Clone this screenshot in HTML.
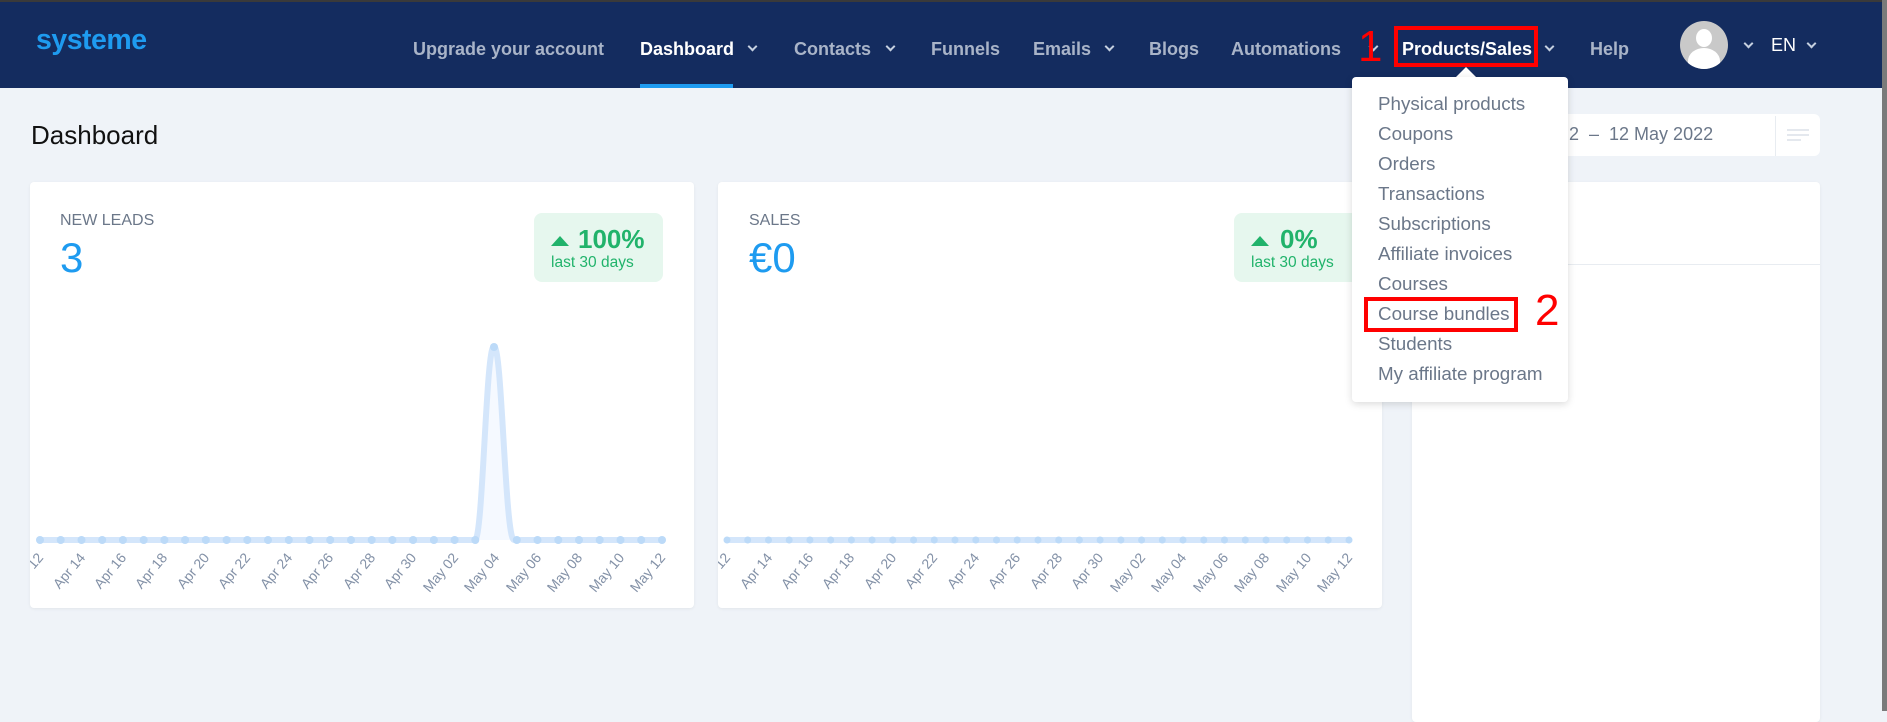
<!DOCTYPE html>
<html><head><meta charset="utf-8"><style>
*{margin:0;padding:0;box-sizing:border-box}
body{width:1887px;height:711px;overflow:hidden;background:#eff3f8;font-family:"Liberation Sans",sans-serif;position:relative}
.a{position:absolute;white-space:nowrap}
.nav{left:0;top:0;width:1887px;height:88px;background:#142c5f;border-top:2px solid #3a3a3a}
.ni{position:absolute;top:36px;font-size:18px;color:#a9b4c8;font-weight:bold;line-height:22px}
.chev{position:absolute;width:7px;height:7px;border-right:2px solid #c5d0e0;border-bottom:2px solid #c5d0e0;transform:rotate(45deg)}
.card{position:absolute;background:#fff;border-radius:4px;box-shadow:0 1px 3px rgba(0,0,0,.06);overflow:hidden}
.lbl{position:absolute;font-size:16px;color:#6b7789;top:212px}
.big{position:absolute;font-size:42px;color:#1e9bf0;top:234px;line-height:48px}
.badge{position:absolute;background:#e6f7ee;border-radius:8px;width:129px;height:69px;top:213px}
.badge .p{position:absolute;top:11px;font-size:26px;color:#21b36b;font-weight:bold}
.badge .tri{position:absolute;left:17px;top:23px;width:0;height:0;border-left:9px solid transparent;border-right:9px solid transparent;border-bottom:10px solid #21b36b}
.badge .s{position:absolute;left:17px;top:41px;font-size:15.5px;color:#21b36b}
.dd{left:1352px;top:77px;width:216px;height:325px;background:#fff;border-radius:4px;box-shadow:0 2px 8px rgba(0,0,0,.15)}
.di{position:absolute;left:26px;font-size:18.8px;color:#6b7789}
svg text{font-family:"Liberation Sans",sans-serif;font-size:14px;fill:#8391a7}
</style></head><body>
<div class="a nav">
<div class="a" style="left:36px;top:22px;font-size:28.5px;font-weight:bold;color:#1e9bf0;letter-spacing:-0.5px">systeme</div>
<div class="ni" style="left:413px">Upgrade your account</div>
<div class="ni" style="left:640px;color:#fff">Dashboard</div><div class="chev" style="left:749px;top:41px"></div>
<div class="a" style="left:640px;top:82px;width:93px;height:4px;background:#1e9bf0"></div>
<div class="ni" style="left:794px">Contacts</div><div class="chev" style="left:887px;top:41px"></div>
<div class="ni" style="left:931px">Funnels</div>
<div class="ni" style="left:1033px">Emails</div><div class="chev" style="left:1106px;top:41px"></div>
<div class="ni" style="left:1149px">Blogs</div>
<div class="ni" style="left:1231px">Automations</div><div class="chev" style="left:1370px;top:41px"></div>
<div class="a" style="left:1358px;top:20px;font-size:44px;color:#f00;line-height:50px">1</div>
<div class="a" style="left:1394px;top:24px;width:144px;height:41px;border:4px solid #f00"></div>
<div class="ni" style="left:1402px;color:#fff">Products/Sales</div><div class="chev" style="left:1546px;top:41px"></div>
<div class="ni" style="left:1590px">Help</div>
<div class="a" style="left:1680px;top:19px;width:48px;height:48px;border-radius:50%;background:#c9c9c9;overflow:hidden">
<div class="a" style="left:16px;top:8px;width:16px;height:18px;border-radius:50%;background:#fff"></div>
<div class="a" style="left:8px;top:27px;width:32px;height:26px;border-radius:50% 50% 0 0;background:#fff"></div></div>
<div class="chev" style="left:1745px;top:38px"></div>
<div class="a" style="left:1771px;top:33px;font-size:18px;color:#fff">EN</div>
<div class="chev" style="left:1808px;top:38px"></div>
</div>
<div class="a" style="left:1882px;top:0;width:5px;height:711px;background:#7a7a7a"></div>
<div class="a" style="left:31px;top:120px;font-size:26px;color:#111">Dashboard</div>
<div class="a" style="left:1500px;top:114px;width:320px;height:42px;background:#fff;border-radius:6px">
<div class="a" style="left:69px;top:10px;font-size:18px;color:#6b7789">2 &nbsp;–&nbsp; 12 May 2022</div>
<div class="a" style="left:275px;top:2px;width:1px;height:40px;background:#e8ecf1"></div>
<div class="a" style="left:287px;top:15px;width:22px;height:2px;background:#e4e8ee;box-shadow:0 5px 0 #e4e8ee"></div>
<div class="a" style="left:287px;top:25px;width:14px;height:2px;background:#e4e8ee"></div>
</div>
<div class="card" style="left:30px;top:182px;width:664px;height:426px">
<svg width="664" height="426" style="position:absolute;left:0;top:0">
<path d="M10 358 L445 358 C453 358 456 160 464 165 C472 160 475 358 484 358 L632 358" fill="#f5f9ff" stroke="#d4e6fb" stroke-width="6"/>
<g fill="#bcdaf8"><circle cx="10" cy="358" r="4"/><circle cx="30.7" cy="358" r="4"/><circle cx="51.5" cy="358" r="4"/><circle cx="72.2" cy="358" r="4"/><circle cx="92.9" cy="358" r="4"/><circle cx="113.7" cy="358" r="4"/><circle cx="134.4" cy="358" r="4"/><circle cx="155.1" cy="358" r="4"/><circle cx="175.8" cy="358" r="4"/><circle cx="196.6" cy="358" r="4"/><circle cx="217.3" cy="358" r="4"/><circle cx="238" cy="358" r="4"/><circle cx="258.8" cy="358" r="4"/><circle cx="279.5" cy="358" r="4"/><circle cx="300.2" cy="358" r="4"/><circle cx="321" cy="358" r="4"/><circle cx="341.7" cy="358" r="4"/><circle cx="362.4" cy="358" r="4"/><circle cx="383.1" cy="358" r="4"/><circle cx="403.9" cy="358" r="4"/><circle cx="424.6" cy="358" r="4"/><circle cx="445.3" cy="358" r="4"/><circle cx="464" cy="165" r="4"/><circle cx="486.8" cy="358" r="4"/><circle cx="507.5" cy="358" r="4"/><circle cx="528.3" cy="358" r="4"/><circle cx="549" cy="358" r="4"/><circle cx="569.7" cy="358" r="4"/><circle cx="590.5" cy="358" r="4"/><circle cx="611.2" cy="358" r="4"/><circle cx="632" cy="358" r="4"/></g>
<g text-anchor="end">
<text transform="translate(14 376) rotate(-50)">Apr 12</text>
<text transform="translate(56 376) rotate(-50)">Apr 14</text>
<text transform="translate(97 376) rotate(-50)">Apr 16</text>
<text transform="translate(138 376) rotate(-50)">Apr 18</text>
<text transform="translate(180 376) rotate(-50)">Apr 20</text>
<text transform="translate(221 376) rotate(-50)">Apr 22</text>
<text transform="translate(263 376) rotate(-50)">Apr 24</text>
<text transform="translate(304 376) rotate(-50)">Apr 26</text>
<text transform="translate(346 376) rotate(-50)">Apr 28</text>
<text transform="translate(387 376) rotate(-50)">Apr 30</text>
<text transform="translate(429 376) rotate(-50)">May 02</text>
<text transform="translate(470 376) rotate(-50)">May 04</text>
<text transform="translate(512 376) rotate(-50)">May 06</text>
<text transform="translate(553 376) rotate(-50)">May 08</text>
<text transform="translate(595 376) rotate(-50)">May 10</text>
<text transform="translate(636 376) rotate(-50)">May 12</text>
</g></svg>
</div>
<div class="lbl" style="left:60px">NEW LEADS</div>
<div class="big" style="left:60px">3</div>
<div class="badge" style="left:534px"><div class="tri"></div><div class="p" style="left:44px">100%</div><div class="s">last 30 days</div></div>
<div class="card" style="left:718px;top:182px;width:664px;height:426px">
<svg width="664" height="426" style="position:absolute;left:0;top:0">
<path d="M9 358 L632 358" stroke="#d4e6fb" stroke-width="6"/>
<g fill="#bcdaf8"><circle cx="9" cy="358" r="3.5"/><circle cx="29.7" cy="358" r="3.5"/><circle cx="50.5" cy="358" r="3.5"/><circle cx="71.2" cy="358" r="3.5"/><circle cx="91.9" cy="358" r="3.5"/><circle cx="112.7" cy="358" r="3.5"/><circle cx="133.4" cy="358" r="3.5"/><circle cx="154.1" cy="358" r="3.5"/><circle cx="174.8" cy="358" r="3.5"/><circle cx="195.6" cy="358" r="3.5"/><circle cx="216.3" cy="358" r="3.5"/><circle cx="237" cy="358" r="3.5"/><circle cx="257.8" cy="358" r="3.5"/><circle cx="278.5" cy="358" r="3.5"/><circle cx="299.2" cy="358" r="3.5"/><circle cx="320" cy="358" r="3.5"/><circle cx="340.7" cy="358" r="3.5"/><circle cx="361.4" cy="358" r="3.5"/><circle cx="382.1" cy="358" r="3.5"/><circle cx="402.9" cy="358" r="3.5"/><circle cx="423.6" cy="358" r="3.5"/><circle cx="444.3" cy="358" r="3.5"/><circle cx="465" cy="358" r="3.5"/><circle cx="485.8" cy="358" r="3.5"/><circle cx="506.5" cy="358" r="3.5"/><circle cx="527.3" cy="358" r="3.5"/><circle cx="548" cy="358" r="3.5"/><circle cx="568.7" cy="358" r="3.5"/><circle cx="589.5" cy="358" r="3.5"/><circle cx="610.2" cy="358" r="3.5"/><circle cx="631" cy="358" r="3.5"/></g>
<g text-anchor="end">
<text transform="translate(13 376) rotate(-50)">Apr 12</text>
<text transform="translate(55 376) rotate(-50)">Apr 14</text>
<text transform="translate(96 376) rotate(-50)">Apr 16</text>
<text transform="translate(137 376) rotate(-50)">Apr 18</text>
<text transform="translate(179 376) rotate(-50)">Apr 20</text>
<text transform="translate(220 376) rotate(-50)">Apr 22</text>
<text transform="translate(262 376) rotate(-50)">Apr 24</text>
<text transform="translate(303 376) rotate(-50)">Apr 26</text>
<text transform="translate(345 376) rotate(-50)">Apr 28</text>
<text transform="translate(386 376) rotate(-50)">Apr 30</text>
<text transform="translate(428 376) rotate(-50)">May 02</text>
<text transform="translate(469 376) rotate(-50)">May 04</text>
<text transform="translate(511 376) rotate(-50)">May 06</text>
<text transform="translate(552 376) rotate(-50)">May 08</text>
<text transform="translate(594 376) rotate(-50)">May 10</text>
<text transform="translate(635 376) rotate(-50)">May 12</text>
</g></svg>
</div>
<div class="lbl" style="left:749px">SALES</div>
<div class="big" style="left:749px">€0</div>
<div class="badge" style="left:1234px"><div class="tri"></div><div class="p" style="left:46px">0%</div><div class="s">last 30 days</div></div>
<div class="card" style="left:1412px;top:182px;width:408px;height:540px">
<div class="a" style="left:0;top:82px;width:408px;height:1px;background:#e8ecf1"></div></div>
<div class="a" style="left:1455px;top:67px;width:0;height:0;border-left:11px solid transparent;border-right:11px solid transparent;border-bottom:11px solid #fff"></div>
<div class="a dd">
<div class="di" style="top:16px">Physical products</div>
<div class="di" style="top:46px">Coupons</div>
<div class="di" style="top:76px">Orders</div>
<div class="di" style="top:106px">Transactions</div>
<div class="di" style="top:136px">Subscriptions</div>
<div class="di" style="top:166px">Affiliate invoices</div>
<div class="di" style="top:196px">Courses</div>
<div class="di" style="top:226px">Course bundles</div>
<div class="di" style="top:256px">Students</div>
<div class="di" style="top:286px">My affiliate program</div>
</div>
<div class="a" style="left:1364px;top:297px;width:154px;height:35px;border:4px solid #f00"></div>
<div class="a" style="left:1535px;top:286px;font-size:44px;color:#f00;line-height:50px">2</div>
</body></html>
